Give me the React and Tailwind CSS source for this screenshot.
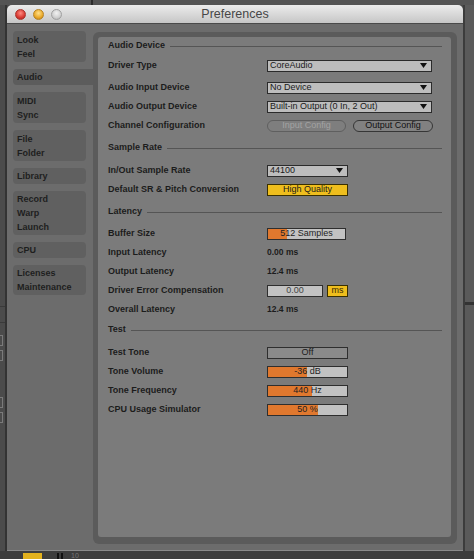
import React from 'react';

const font = "font-['Liberation_Sans',Arial,sans-serif]";

const tabs = [
  { lines: ['Look', 'Feel'], h: 'h-[31px]' },
  { lines: ['Audio'], h: 'h-[16px]', active: true },
  { lines: ['MIDI', 'Sync'], h: 'h-[31px]' },
  { lines: ['File', 'Folder'], h: 'h-[31px]' },
  { lines: ['Library'], h: 'h-[16px]' },
  { lines: ['Record', 'Warp', 'Launch'], h: 'h-[44px]' },
  { lines: ['CPU'], h: 'h-[16px]' },
  { lines: ['Licenses', 'Maintenance'], h: 'h-[30px]' },
];

const Arrow = () => (
  <svg width="7" height="5" viewBox="0 0 7 5">
    <polygon points="0,0 7,0 3.5,5" fill="#111" />
  </svg>
);

const Header = ({ title, className = '' }) => (
  <div className={`flex items-center h-4 gap-[5px] ${className}`}>
    <span className="text-[9px] font-bold text-[#1c1c1c]">{title}</span>
    <div className="flex-1 h-px bg-[#555555]" />
  </div>
);

const Row = ({ label, children, className = '' }) => (
  <div className={`flex items-center h-[19px] ${className}`}>
    <div className="w-[159px] text-[9px] font-bold text-[#1c1c1c] whitespace-nowrap">{label}</div>
    {children}
  </div>
);

const Select = ({ value, w }) => (
  <div className={`${w} h-[12px] border border-[#2b2b2b] bg-[#bdbdbd] flex items-center justify-between pl-[2px] pr-[4px] text-[9px] leading-none text-[#1a1a1a]`}>
    <span>{value}</span>
    <Arrow />
  </div>
);

const Meter = ({ text, fill, w = 'w-[81px]' }) => (
  <div className={`relative ${w} h-[12px] border border-[#2e2e2e] bg-[#c2c2c2] flex items-center justify-center text-[9px] leading-none text-[#222]`}>
    <div className="absolute left-0 top-0 bottom-0 bg-[#e0782e]" style={{ width: fill }} />
    <span className="relative">{text}</span>
  </div>
);

const Value = ({ children }) => (
  <span className="text-[8.5px] font-bold text-[#1c1c1c]">{children}</span>
);

export default function App() {
  return (
    <div className={`w-[474px] h-[559px] bg-[#4a4a4a] overflow-hidden flex flex-col ${font}`}>
      {/* app behind, top edge */}
      <div className="h-[5px] flex bg-[#545454]">
        <div className="w-[91px]" />
        <div className="w-[2px] bg-[#2c2c2c]" />
      </div>

      <div className="flex h-[546px]">
        {/* app behind, left edge */}
        <div className="w-[7px] bg-[#4b4b4b] border-r-2 border-[#333333] flex flex-col">
          <div className="mt-[301px] h-px w-[5px] bg-[#3a3a3a]" />
          <div className="mt-[15px] h-px w-[5px] bg-[#3a3a3a]" />
          <div className="mt-[12px] h-[11px] w-[3px] border border-l-0 border-[#7a7a7a]" />
          <div className="mt-[4px] h-[11px] w-[3px] border border-l-0 border-[#7a7a7a]" />
          <div className="mt-[36px] h-[11px] w-[3px] border border-l-0 border-[#7a7a7a]" />
          <div className="mt-[4px] h-[11px] w-[3px] border border-l-0 border-[#7a7a7a]" />
        </div>

        {/* window */}
        <div className="w-[456px] flex flex-col rounded-t-[5px] overflow-hidden">
          <div className="h-[19px] shrink-0 bg-[linear-gradient(#ececec,#c6c6c6)] border-b border-[#4a4a4a] flex items-center relative">
            <div className="flex items-center gap-[7px] pl-[8px]">
              <div className="w-[11px] h-[11px] rounded-full bg-[radial-gradient(circle_at_50%_35%,#ff8a80,#d83a32_60%,#9c1f1a)] border border-[#a8352e]" />
              <div className="w-[11px] h-[11px] rounded-full bg-[radial-gradient(circle_at_50%_35%,#ffe08a,#e9a829_60%,#b07810)] border border-[#b58325]" />
              <div className="w-[11px] h-[11px] rounded-full bg-[radial-gradient(circle_at_50%_35%,#f2f2f2,#cfcfcf_60%,#a9a9a9)] border border-[#a0a0a0]" />
            </div>
            <div className="absolute inset-0 flex items-center justify-center text-[12.5px] text-[#474747] pointer-events-none">
              Preferences
            </div>
          </div>

          <div className="flex-1 bg-[#6c6c6c] flex pt-[8px] pb-[6px] border-b border-[#8a8a8a]">
            {/* sidebar */}
            <div className="w-[86px] shrink-0 pl-[6px] flex flex-col gap-[7px]">
              {tabs.map((t, i) => (
                <div
                  key={i}
                  className={`${t.h} ${t.active ? 'w-[80px] rounded-l-[4px] bg-[#5c5c5c]' : 'w-[73px] rounded-[4px] bg-[#606060]'} flex flex-col justify-center pl-[4px] text-[9px] font-bold leading-[14px] text-[#1e1e1e] ${i === 0 ? '-mt-px' : ''}`}
                >
                  {t.lines.map((l) => (
                    <span key={l}>{l}</span>
                  ))}
                </div>
              ))}
            </div>

            {/* main panel */}
            <div className="w-[364px] shrink-0 rounded-[6px] bg-[#5b5b5b] pt-[5px] pl-[5px] pr-[6px] pb-[7px] flex">
              <div className="flex-1 rounded-[3px] bg-[#7b7b7b] pt-[1px] pl-[10px] pr-[9px] flex flex-col">
                <Header title="Audio Device" />
                <Row label="Driver Type" className="mt-[2px]">
                  <Select value="CoreAudio" w="w-[165px]" />
                </Row>
                <Row label="Audio Input Device" className="mt-[3px]">
                  <Select value="No Device" w="w-[165px]" />
                </Row>
                <Row label="Audio Output Device">
                  <Select value="Built-in Output (0 In, 2 Out)" w="w-[165px]" />
                </Row>
                <Row label="Channel Configuration">
                  <div className="flex gap-[7px]">
                    <div className="w-[79px] h-[12px] rounded-full border border-[#5f5f5f] bg-[#7e7e7e] flex items-center justify-center text-[9px] leading-none text-[#a3a3a3]">
                      Input Config
                    </div>
                    <div className="w-[80px] h-[12px] rounded-full border border-[#363636] bg-[#818181] flex items-center justify-center text-[9px] leading-none text-[#111]">
                      Output Config
                    </div>
                  </div>
                </Row>

                <Header title="Sample Rate" className="mt-[5px]" />
                <Row label="In/Out Sample Rate" className="mt-[5px]">
                  <Select value="44100" w="w-[81px]" />
                </Row>
                <Row label="Default SR & Pitch Conversion">
                  <div className="w-[81px] h-[12px] border border-[#3a3000] bg-[#efbe1d] flex items-center justify-center text-[9px] leading-none text-[#1a1a1a]">
                    High Quality
                  </div>
                </Row>

                <Header title="Latency" className="mt-[5px]" />
                <Row label="Buffer Size" className="mt-[4px]">
                  <Meter text="512 Samples" fill="19px" w="w-[79px]" />
                </Row>
                <Row label="Input Latency">
                  <Value>0.00 ms</Value>
                </Row>
                <Row label="Output Latency">
                  <Value>12.4 ms</Value>
                </Row>
                <Row label="Driver Error Compensation">
                  <div className="flex gap-[4px]">
                    <div className="w-[56px] h-[12px] border border-[#2e2e2e] bg-[#c2c2c2] flex items-center justify-center text-[9px] leading-none text-[#444]">
                      0.00
                    </div>
                    <div className="w-[21px] h-[12px] border border-[#3a3000] bg-[#efbe1d] flex items-center justify-center text-[9px] leading-none text-[#3a2a00]">
                      ms
                    </div>
                  </div>
                </Row>
                <Row label="Overall Latency">
                  <Value>12.4 ms</Value>
                </Row>

                <Header title="Test" className="mt-[3px]" />
                <Row label="Test Tone" className="mt-[5px]">
                  <div className="w-[81px] h-[12px] border border-[#2e2e2e] bg-[#8a8a8a] flex items-center justify-center text-[9px] leading-none text-[#1a1a1a]">
                    Off
                  </div>
                </Row>
                <Row label="Tone Volume">
                  <Meter text="-36 dB" fill="39px" />
                </Row>
                <Row label="Tone Frequency">
                  <Meter text="440 Hz" fill="44px" />
                </Row>
                <Row label="CPU Usage Simulator">
                  <Meter text="50 %" fill="50px" />
                </Row>
              </div>
            </div>
          </div>
        </div>

        {/* app behind, right edge */}
        <div className="w-[11px] bg-[#5a5a5a] border-l-2 border-[#3c3c3c] flex flex-col">
          <div className="mt-[297px] h-[3px] bg-[#333333]" />
        </div>
      </div>

      {/* app behind, bottom edge */}
      <div className="h-[8px] bg-[#3d3d3d] flex items-end">
        <div className="ml-[23px] w-[19px] h-[6px] bg-[#e3b21e]" />
        <div className="ml-[15px] w-[2px] h-[6px] bg-[#111]" />
        <div className="ml-[2px] w-[2px] h-[6px] bg-[#111]" />
        <span className="ml-[8px] text-[7px] leading-[7px] text-[#777]">10</span>
      </div>
    </div>
  );
}
